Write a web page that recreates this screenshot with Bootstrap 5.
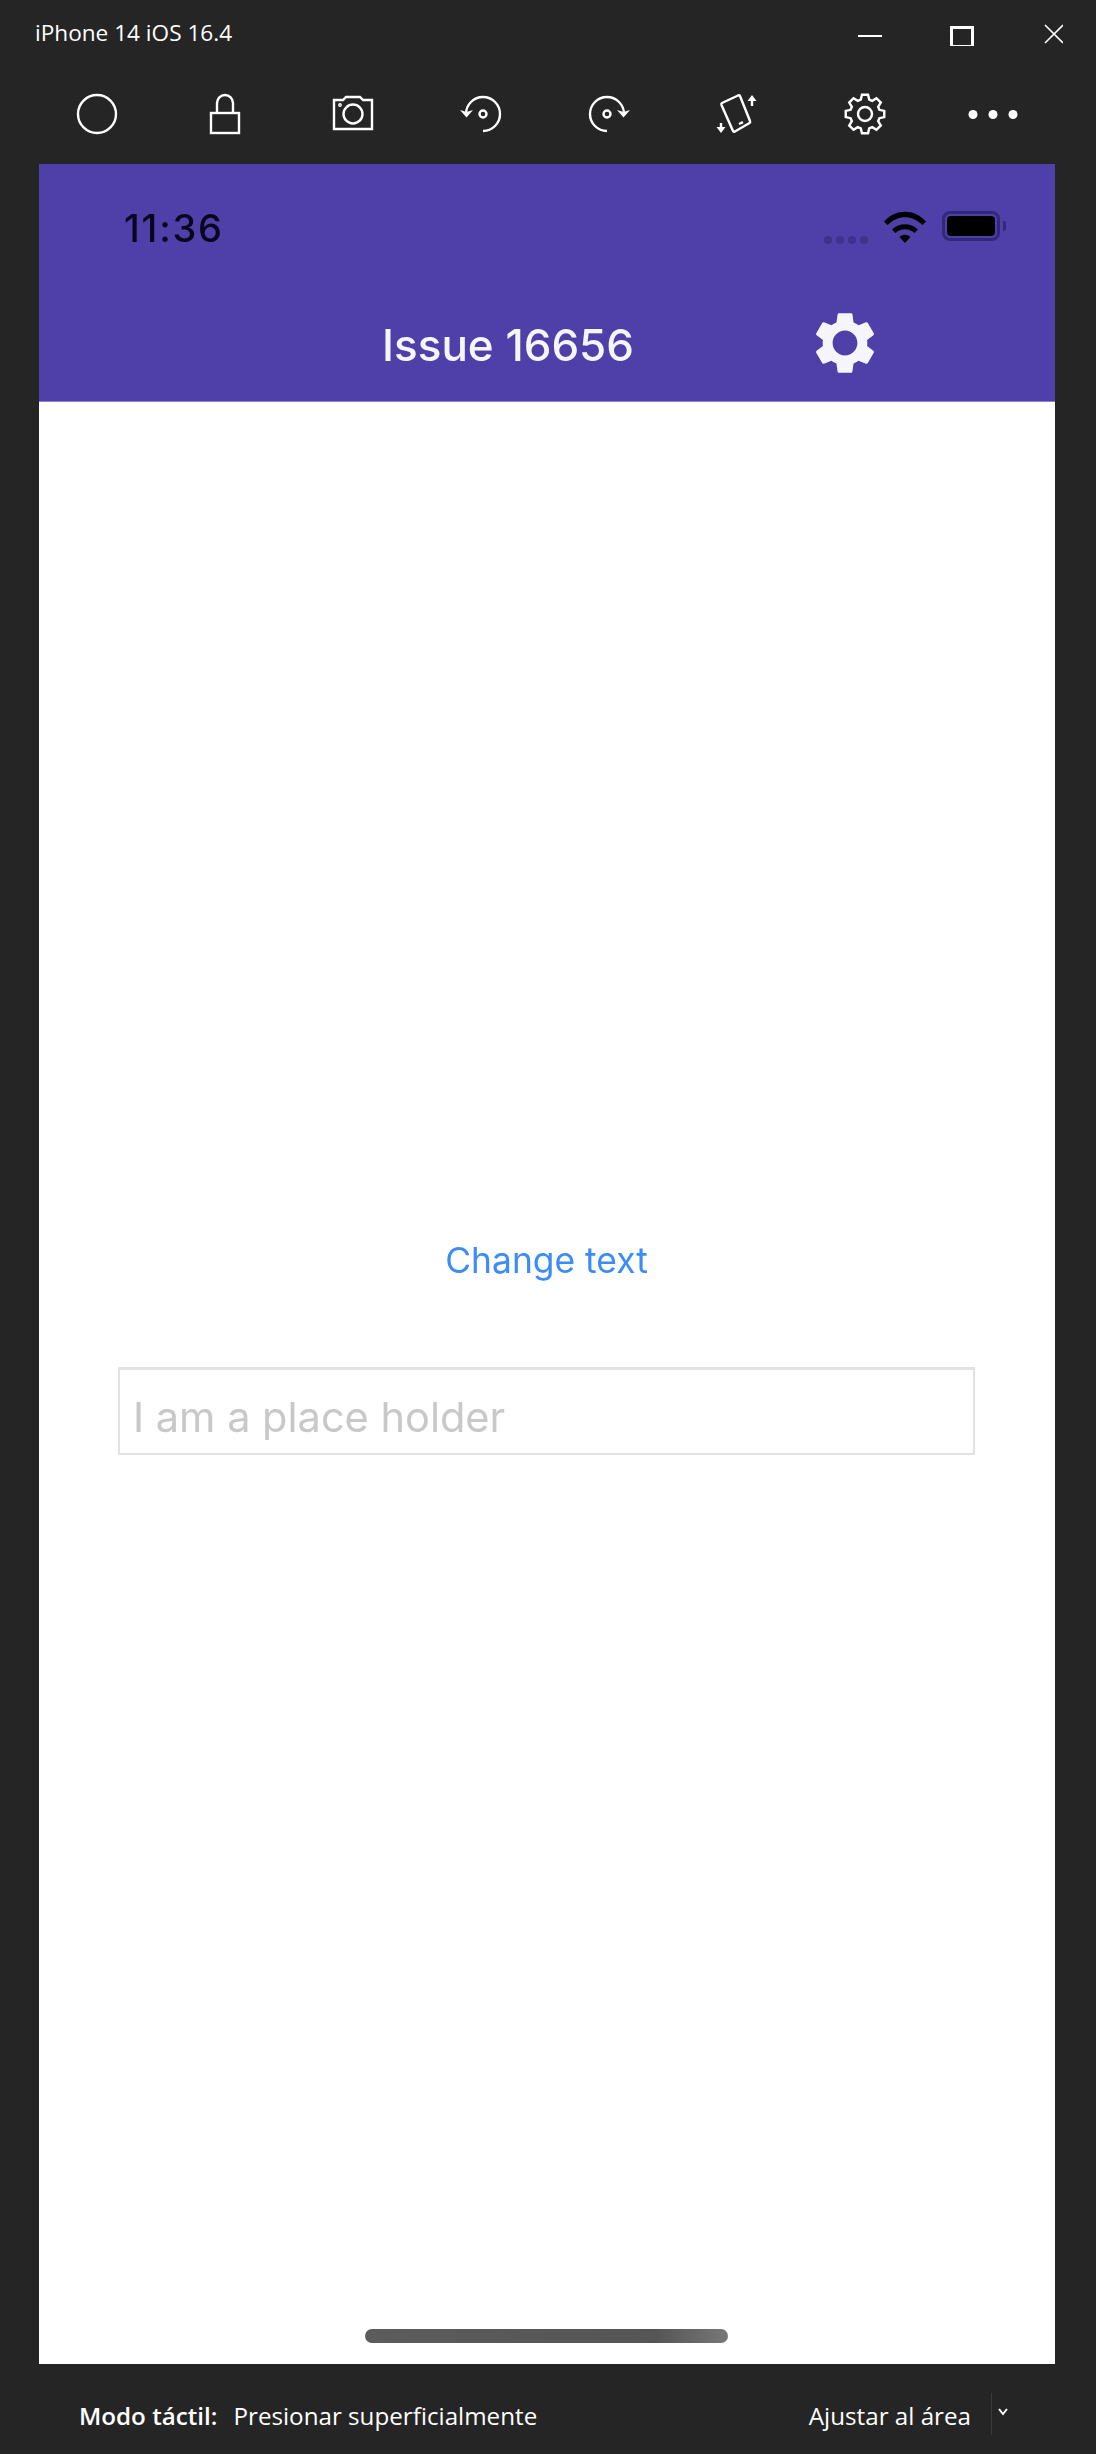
<!DOCTYPE html>
<html lang="es">

<head>
    <meta charset="UTF-8">
    <meta name="viewport" content="width=device-width, initial-scale=1.0">
    <title>iPhone 14 iOS 16.4</title>
    <link href="https://cdn.jsdelivr.net/npm/bootstrap@5.3.0/dist/css/bootstrap.min.css" rel="stylesheet">
    <style>
        body {
            background: #252525;
            height: 2454px;
            overflow: hidden;
            font-family: "Open Sans", "Noto Sans", sans-serif;
        }

        .sim-window {
            width: 1096px;
            height: 2454px;
        }

        .sim-title {
            height: 46px;
            padding-left: 35px;
            padding-top: 14px;
            color: #fff;
            font-size: 22.6px;
            line-height: 30px;
        }

        .sim-name {
            margin-top: 4px;
        }

        .win-btn {
            stroke: #fff;
            fill: none;
            margin-right: 33px;
        }

        .sim-tools {
            height: 118px;
            padding-left: 33px;
        }

        .tool-cell {
            width: 128px;
            height: 40px;
            margin-top: 47px;
        }

        .tool-icon {
            width: 42px;
            height: 42px;
            fill: none;
            stroke: #fff;
            stroke-width: 2.4;
        }

        .tool-dots {
            width: 50px;
            stroke: none;
            fill: #fff;
        }

        .arrow-head {
            fill: #fff;
            stroke: none;
        }

        .phone-screen {
            margin: 0 41px 0 39px;
            height: 2200px;
            background: #fff;
        }

        .app-head {
            height: 238px;
            background: #4f3fa8;
            border-bottom: 1px solid #8d82c8;
        }

        .status-row {
            height: 80px;
            padding: 47px 49px 0 85px;
            filter: blur(.4px);
        }

        .clock {
            color: #07061f;
            font-family: Inter, "Liberation Sans", sans-serif;
            font-size: 38px;
            font-weight: 500;
            line-height: 46px;
            letter-spacing: 1.8px;
            margin-top: -6px;
        }

        .signal-dot {
            width: 8px;
            height: 8px;
            border-radius: 50%;
            background: #40328c;
            margin-top: 25px;
        }

        .batt {
            width: 58px;
            height: 30px;
            border: 3px solid #32287a;
            border-radius: 8px;
            padding: 2px;
            margin-left: 16px;
        }

        .batt-fill {
            height: 100%;
            background: #000;
            border-radius: 4px;
        }

        .batt-tip {
            width: 3px;
            height: 10px;
            margin: 10px 0 0 3px;
            background: #32287a;
            border-radius: 0 3px 3px 0;
        }

        .nav-row {
            height: 157px;
            padding-left: 343px;
            color: #f6f5fb;
            filter: blur(.4px);
        }

        .nav-title {
            width: 252px;
            margin-top: 77px;
            font-family: Inter, "Liberation Sans", sans-serif;
            font-size: 44px;
            font-weight: 500;
            line-height: 48px;
            white-space: nowrap;
        }

        .nav-gear {
            width: 62px;
            height: 62px;
            margin: 68px 0 0 180px;
            fill: #f6f5fb;
        }

        .app-body {
            height: 1962px;
            padding: 0 80px 21px 79px;
        }

        .btn.change-btn {
            margin-top: 836px;
            color: #3b8df5;
            font-family: Inter, "Liberation Sans", sans-serif;
            font-size: 35.4px;
            line-height: 46px;
            padding: 0;
            border: 0;
            filter: blur(.4px);
        }

        .form-control.place-input {
            margin-top: 83px;
            height: 88px;
            border-width: 3px 2px 2px;
            border-color: #e2e2e2;
            border-radius: 0;
            padding: 10px 13px 0;
            font-family: Inter, "Liberation Sans", sans-serif;
            font-size: 41.5px;
            filter: blur(.4px);
        }

        .place-input::placeholder {
            color: #c8c8c8;
            opacity: 1;
        }

        .home-bar {
            width: 363px;
            height: 14px;
            background: linear-gradient(90deg, #5c5c5c, #555 80%, #777);
            border-radius: 7px;
            filter: blur(.7px);
        }

        .sim-foot {
            height: 90px;
            padding: 37px 0 0 79px;
            color: #fff;
            font-size: 24.2px;
            line-height: 30px;
        }

        .foot-mode {
            margin-left: 16px;
        }

        .foot-fit {
            margin-left: auto;
        }

        .foot-sep {
            width: 1px;
            height: 42px;
            margin: -8px 5px 0 20px;
            background: #3a3a3a;
        }

        .foot-chev {
            width: 12px;
            height: 10px;
            margin: 6px 87px 0 0;
            fill: none;
            stroke: #fff;
            stroke-width: 2;
        }
    </style>
</head>

<body class="m-0">
    <div class="sim-window d-flex flex-column">
        <!-- Barra de la ventana -->
        <div class="sim-title d-flex">
            <span class="sim-name">iPhone 14 iOS 16.4</span>
            <svg class="win-btn ms-auto" width="205" height="32" viewBox="0 0 205 32">
                <path d="M0 22h24" stroke-width="2" />
                <rect x="93.500" y="13.500" width="21" height="19" stroke-width="3" />
                <path d="M187 11l18 18M205 11l-18 18" stroke-width="1.6" />
            </svg>
        </div>

        <!-- Herramientas -->
        <div class="sim-tools d-flex">
            <div class="tool-cell d-flex justify-content-center">
                <svg class="tool-icon" viewBox="0 0 42 42"><circle cx="21" cy="21" r="19" /></svg>
            </div>
            <div class="tool-cell d-flex justify-content-center">
                <svg class="tool-icon" viewBox="0 0 42 42">
                    <rect x="7" y="20" width="28" height="20" />
                    <path d="M13 20V10a8 8 0 0 1 16 0v10" />
                </svg>
            </div>
            <div class="tool-cell d-flex justify-content-center">
                <svg class="tool-icon" viewBox="0 0 42 42">
                    <path d="M2 7h9l3-3h14l3 3h9v29H2z" />
                    <circle cx="21" cy="21" r="9.500" />
                    <circle cx="8" cy="12" r=".7" />
                </svg>
            </div>
            <div class="tool-cell d-flex justify-content-center">
                <svg class="tool-icon" viewBox="0 0 42 42">
                    <path d="M6 21a17 17 0 1 1 17 17" />
                    <path class="arrow-head" d="M0 17l6.500 7.500L13 17l-6.500 2z" />
                    <circle cx="23" cy="21" r="3.500" />
                </svg>
            </div>
            <div class="tool-cell d-flex justify-content-center">
                <svg class="tool-icon" viewBox="0 0 42 42">
                    <path d="M36 21a17 17 0 1 0-17 17" />
                    <path class="arrow-head" d="M29 17l6.500 7.500L42 17l-6.500 2z" />
                    <circle cx="19" cy="21" r="3.500" />
                </svg>
            </div>
            <div class="tool-cell d-flex justify-content-center">
                <svg class="tool-icon" viewBox="0 0 42 42">
                    <path d="M6 10L22 2.500q1.500-.5 2 .5L34 28q.5 1.500-.5 2L19 38.500q-1.500.5-2-.5L5.500 12q-.5-1.500.5-2z" />
                    <path d="M23 31l4-1.800" />
                    <path d="M36 13V6M5 30v5" />
                    <path class="arrow-head" d="M31.500 8l4.500-6 4.500 6zM.5 34h9L5 40z" />
                </svg>
            </div>
            <div class="tool-cell d-flex justify-content-center">
                <svg class="tool-icon" viewBox="0 0 42 42">
                    <path id="toolGear" />
                    <circle cx="21" cy="21" r="7" />
                </svg>
            </div>
            <div class="tool-cell d-flex justify-content-center">
                <svg class="tool-icon tool-dots" viewBox="0 0 50 42">
                    <circle cx="5" cy="21.500" r="4.500" />
                    <circle cx="25" cy="21.500" r="4.500" />
                    <circle cx="45" cy="21.500" r="4.500" />
                </svg>
            </div>
        </div>

        <!-- Pantalla del teléfono -->
        <div class="phone-screen d-flex flex-column">
            <div class="app-head">
                <div class="status-row d-flex">
                    <span class="clock">11:36</span>
                    <div class="ms-auto d-flex gap-1">
                        <span class="signal-dot"></span>
                        <span class="signal-dot"></span>
                        <span class="signal-dot"></span>
                        <span class="signal-dot"></span>
                    </div>
                    <svg class="ms-3" width="42" height="32" viewBox="0 0 42 32">
                        <path d="M0 10.500C12-2.500 30-2.500 42 10.500l-3.500 3.500C28 3.500 14 3.500 3.500 14z" />
                        <path d="M8 18.500C15 11.500 27 11.500 34 18.500l-3.500 3.500C25 17 17 17 11.500 22z" />
                        <path d="M15.500 26C19 23 23 23 26.500 26L21 32z" />
                    </svg>
                    <div class="batt">
                        <div class="batt-fill"></div>
                    </div>
                    <span class="batt-tip"></span>
                </div>
                <div class="nav-row d-flex">
                    <span class="nav-title">Issue 16656</span>
                    <svg class="nav-gear" viewBox="2.500 2 19 20">
                        <path fill-rule="evenodd"
                            d="M19.140 12.940c.04-.3.06-.61.06-.94 0-.32-.02-.64-.07-.94l2.030-1.580c.18-.14.23-.41.12-.61l-1.920-3.320c-.12-.22-.37-.29-.59-.22l-2.390.96c-.5-.38-1.030-.7-1.620-.94l-.36-2.540c-.04-.24-.24-.41-.48-.41h-3.840c-.24 0-.43.17-.47.41l-.36 2.540c-.59.24-1.130.57-1.620.94l-2.390-.96c-.22-.08-.47 0-.59.22L2.740 8.870c-.12.21-.08.47.12.61l2.030 1.580c-.05.3-.09.63-.09.94s.02.64.07.94l-2.030 1.580c-.18.14-.23.41-.12.61l1.920 3.320c.12.22.37.29.59.22l2.390-.96c.5.38 1.030.7 1.620.94l.36 2.540c.05.24.24.41.48.41h3.840c.24 0 .44-.17.47-.41l.36-2.540c.59-.24 1.130-.56 1.620-.94l2.390.96c.22.08.47 0 .59-.22l1.920-3.320c.12-.22.07-.47-.12-.61l-2.010-1.580zM12 16c-2.200 0-4-1.800-4-4s1.800-4 4-4 4 1.800 4 4-1.800 4-4 4z" />
                    </svg>
                </div>
            </div>

            <div class="app-body d-flex flex-column">
                <button type="button" class="btn change-btn align-self-center">Change text</button>
                <input type="text" class="form-control place-input" placeholder="I am a place holder">
                <div class="home-bar mt-auto align-self-center"></div>
            </div>
        </div>

        <!-- Pie de la ventana -->
        <div class="sim-foot d-flex">
            <strong class="fw-semibold">Modo táctil:</strong>
            <span class="foot-mode">Presionar superficialmente</span>
            <span class="foot-fit">Ajustar al área</span>
            <span class="foot-sep"></span>
            <svg class="foot-chev" viewBox="0 0 12 10"><path d="M2 2l4 5 4-5" /></svg>
        </div>
    </div>

    <script src="https://cdn.jsdelivr.net/npm/bootstrap@5.3.0/dist/js/bootstrap.bundle.min.js"></script>
    <script>
        // Dibuja el engranaje de 8 dientes de la barra de herramientas
        function gearPath(cx, cy, outer, inner, teeth) {
            const step = 360 / teeth;
            const pts = [];
            for (let i = 0; i < teeth; i++) {
                const a = i * step - 90;
                [[-step * 0.36, inner], [-step * 0.2, outer], [step * 0.2, outer], [step * 0.36, inner]].forEach(function (p) {
                    const rad = (a + p[0]) * Math.PI / 180;
                    pts.push((cx + p[1] * Math.cos(rad)).toFixed(2) + ' ' + (cy + p[1] * Math.sin(rad)).toFixed(2));
                });
            }
            return 'M' + pts.join('L') + 'z';
        }

        document.getElementById('toolGear').setAttribute('d', gearPath(21, 21, 19.5, 15, 8));
    </script>
</body>

</html>
